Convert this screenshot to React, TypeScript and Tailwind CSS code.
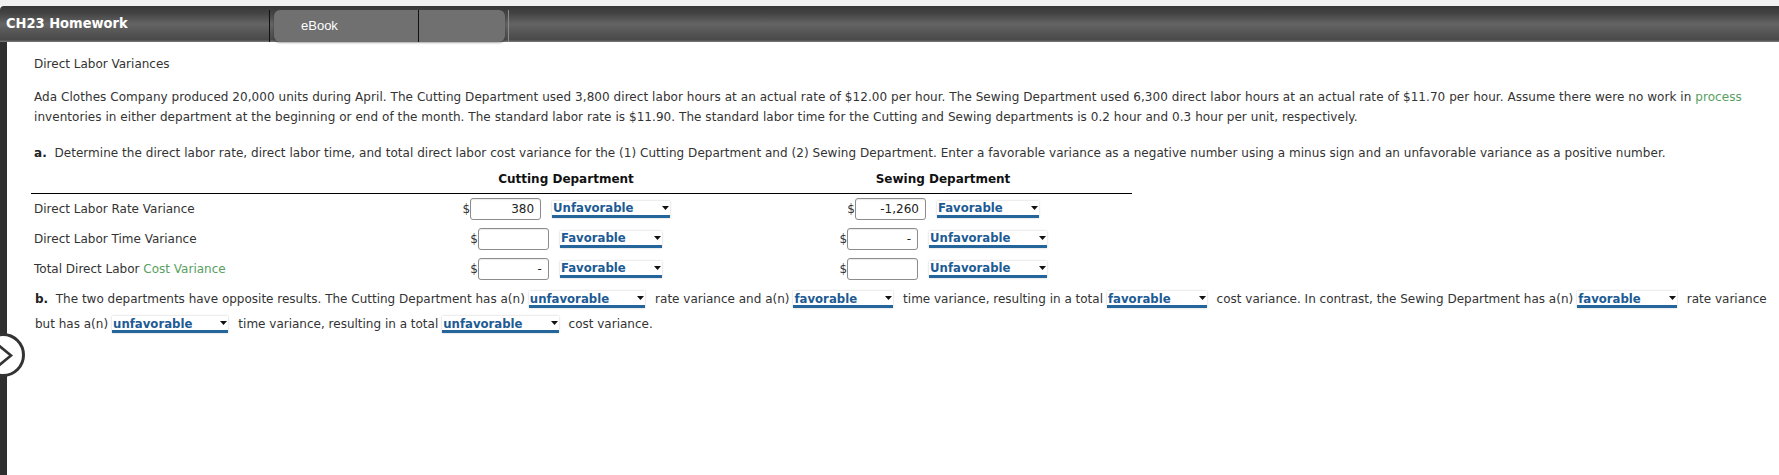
import React from "react";

const Caret = () => (
  <svg width="7" height="4" viewBox="0 0 7 4" className="ml-[28px] shrink-0">
    <path d="M0 0H7L3.5 4Z" fill="#111" />
  </svg>
);

function Sel({ label }: { label: string }) {
  return (
    <span className="inline-flex items-center h-[17px] pl-[1px] pr-[1px] border-b-[3px] border-[#24669c] bg-white shadow-[0_0_2px_rgba(0,0,0,0.22)] align-middle font-['DejaVu_Sans_Condensed',sans-serif] font-bold text-[13px] leading-[13px] tracking-normal text-[#1d5b94]">
      <span>{label}</span>
      <Caret />
    </span>
  );
}

function Money({ value }: { value: string }) {
  return (
    <span className="inline-flex items-center">
      <span className="text-[12px] leading-[12px] text-[#333]">$</span>
      <span className="w-[71px] h-[22px] border border-[#8c8c8c] rounded-[3px] flex items-center justify-end pr-[6px] text-[12px] text-[#222] bg-white shadow-[inset_0_1px_1px_rgba(0,0,0,0.08)]">
        {value}
      </span>
    </span>
  );
}

function Cell({ value, sel }: { value: string; sel: string }) {
  return (
    <div className="flex items-center justify-center">
      <Money value={value} />
      <span className="ml-[11px] flex">
        <Sel label={sel} />
      </span>
    </div>
  );
}

const Green = ({ children }: { children: React.ReactNode }) => (
  <span className="text-[#58a05f]">{children}</span>
);

export default function App() {
  const rows = [
    { label: <>Direct Labor Rate Variance</>, c: ["380", "Unfavorable"], s: ["-1,260", "Favorable"] },
    { label: <>Direct Labor Time Variance</>, c: ["", "Favorable"], s: ["-", "Unfavorable"] },
    {
      label: (
        <>
          Total Direct Labor <Green>Cost Variance</Green>
        </>
      ),
      c: ["-", "Favorable"],
      s: ["", "Unfavorable"],
    },
  ];

  return (
    <div className="relative w-[1779px] h-[475px] bg-white overflow-hidden font-['DejaVu_Sans',sans-serif] text-[12px] text-[#333]">
      {/* top strip */}
      <div className="h-[6px] bg-[#f0f0f0]" />
      {/* header bar */}
      <div className="h-[36px] flex items-end rounded-tl-[4px] bg-[linear-gradient(to_bottom,#363636_0%,#454545_22%,#646464_50%,#545454_75%,#494949_94%,#7c7c7c_100%)]">
        <div className="w-[269px] h-full flex items-center pl-[6px] font-['DejaVu_Sans_Condensed',sans-serif] font-bold text-[14.5px] text-white">
          CH23 Homework
        </div>
        <div className="w-[1px] h-[32px] bg-[#111]" />
        <div className="ml-[4px] w-[231px] h-[32px] rounded-[6px] bg-[#707070] shadow-[0_1px_2px_rgba(0,0,0,0.35)] flex items-stretch">
          <div className="w-[144px] flex items-center pl-[27px] font-['Liberation_Sans',sans-serif] text-[13px] text-white">
            eBook
          </div>
          <div className="w-[1px] bg-[#111]" />
        </div>
        <div className="ml-[3px] w-[1px] h-[32px] bg-[#8a8a8a]" />
      </div>

      {/* body */}
      <div className="flex h-[433px]">
        <div className="w-[7px] bg-[#2f2f2f] shrink-0" />
        <div className="pl-[27px] whitespace-nowrap">
          <div className="pt-[12px] leading-[20px]">Direct Labor Variances</div>
          <div className="mt-[13px] leading-[20px] tracking-[0.055px]">
            <div>
              Ada Clothes Company produced 20,000 units during April. The Cutting Department used 3,800 direct labor
              hours at an actual rate of $12.00 per hour. The Sewing Department used 6,300 direct labor hours at an
              actual rate of $11.70 per hour. Assume there were no work in <Green>process</Green>
            </div>
            <div>
              inventories in either department at the beginning or end of the month. The standard labor rate is $11.90.
              The standard labor time for the Cutting and Sewing departments is 0.2 hour and 0.3 hour per unit,
              respectively.
            </div>
          </div>
          <div className="mt-[16px] leading-[20px] tracking-[0.04px]">
            <b className="text-[#222]">a.</b>&nbsp; Determine the direct labor rate, direct labor time, and total direct
            labor cost variance for the (1) Cutting Department and (2) Sewing Department. Enter a favorable variance as a
            negative number using a minus sign and an unfavorable variance as a positive number.
          </div>

          {/* table */}
          <div className="mt-[6px] ml-[-3px] w-[1101px]">
            <div className="grid grid-cols-[347px_376px_378px] border-b border-black pb-[4px] leading-[20px] font-bold text-[#111]">
              <div />
              <div className="text-center">Cutting Department</div>
              <div className="text-center">Sewing Department</div>
            </div>
            {rows.map((r, i) => (
              <div key={i} className="grid grid-cols-[347px_376px_378px] h-[30px] items-center">
                <div className="pl-[3px]">{r.label}</div>
                <Cell value={r.c[0]} sel={r.c[1]} />
                <Cell value={r.s[0]} sel={r.s[1]} />
              </div>
            ))}
          </div>

          {/* part b */}
          <div className="mt-[3px] ml-[1px] leading-[25px]">
            <div className="flex items-center h-[25px]">
              <span>
                <b className="text-[#222]">b.</b>&nbsp; The two departments have opposite results. The Cutting Department
                has a(n){" "}
              </span>
              <span className="ml-[4px] mr-[10px] flex"><Sel label="unfavorable" /></span>
              <span>rate variance and a(n)</span>
              <span className="ml-[4px] mr-[10px] flex"><Sel label="favorable" /></span>
              <span>time variance, resulting in a total</span>
              <span className="ml-[4px] mr-[10px] flex"><Sel label="favorable" /></span>
              <span>cost variance. In contrast, the Sewing Department has a(n)</span>
              <span className="ml-[4px] mr-[10px] flex"><Sel label="favorable" /></span>
              <span>rate variance</span>
            </div>
            <div className="flex items-center h-[25px]">
              <span>but has a(n)</span>
              <span className="ml-[4px] mr-[10px] flex"><Sel label="unfavorable" /></span>
              <span>time variance, resulting in a total</span>
              <span className="ml-[4px] mr-[10px] flex"><Sel label="unfavorable" /></span>
              <span>cost variance.</span>
            </div>
          </div>
        </div>
      </div>

      {/* side toggle circle */}
      <div className="absolute left-[-19px] top-[333px] w-[44px] h-[44px] rounded-full border-[3px] border-[#333] bg-white">
        <svg width="44" height="44" viewBox="0 0 44 44" className="absolute left-[-3px] top-[-3px]">
          <path d="M16 11 L30 22.5 L16 34" fill="none" stroke="#333" strokeWidth="2.6" />
        </svg>
      </div>
    </div>
  );
}
